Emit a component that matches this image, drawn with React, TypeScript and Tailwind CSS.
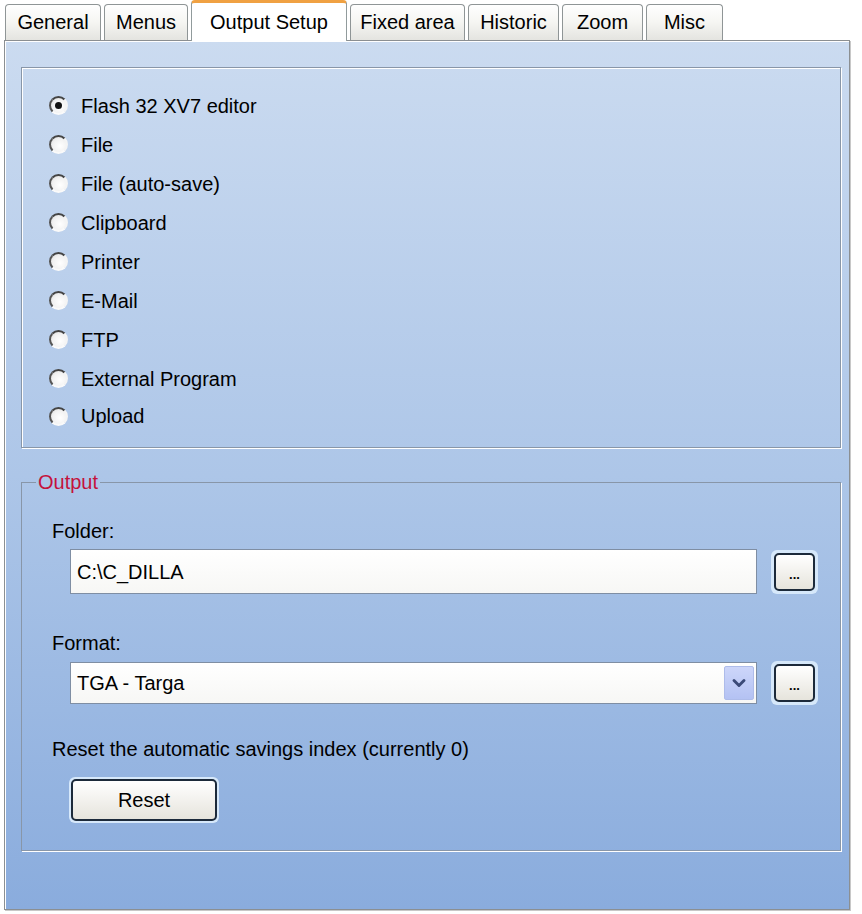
import { ChevronDown } from "lucide-react";

const tabs = ["General", "Menus", "Output Setup", "Fixed area", "Historic", "Zoom", "Misc"];
const tabWidths: Record<string, string> = {
  General: "w-[96px]",
  Menus: "w-[84px]",
  "Output Setup": "w-[156px]",
  "Fixed area": "w-[115px]",
  Historic: "w-[91px]",
  Zoom: "w-[81px]",
  Misc: "w-[77px]",
};

const outputs = [
  "Flash 32 XV7 editor",
  "File",
  "File (auto-save)",
  "Clipboard",
  "Printer",
  "E-Mail",
  "FTP",
  "External Program",
  "Upload",
];

const Radio = ({ checked }: { checked?: boolean }) => (
  <span className="relative w-[19px] h-[19px] rounded-full border-2 border-t-[#444] border-l-[#555] border-r-[#f4f4f4] border-b-[#fafafa] bg-[radial-gradient(circle_at_60%_60%,#ffffff_0%,#f2f2f2_55%,#d8d8d8_100%)] flex items-center justify-center shrink-0">
    {checked && <span className="w-[7px] h-[7px] rounded-full bg-[#111]" />}
  </span>
);

const DotsButton = () => (
  <div className="p-[3px] rounded-[6px] bg-[#d6e8fa]">
    <button className="w-[41px] h-[38px] rounded-[5px] border-2 border-[#1c2a3a] bg-gradient-to-b from-[#ffffff] to-[#e6e4dc] text-[13px] leading-none flex items-end justify-center pb-[8px] font-bold">
      ...
    </button>
  </div>
);

const App = () => {
  return (
    <div className="w-[862px] h-[914px] bg-white text-black text-[20px] font-['Liberation_Sans',Arial,sans-serif]">
      <div className="flex items-end h-[40px] pl-[5px] gap-[3px]">
        {tabs.map((t) =>
          t === "Output Setup" ? (
            <div
              key={t}
              className={`${tabWidths[t]} h-[41px] -mb-[1px] relative z-10 rounded-t-[4px] border border-b-0 border-[#919b9c] border-t-[3px] border-t-[#f0a142] bg-white flex items-start justify-center pt-[4px]`}
            >
              {t}
            </div>
          ) : (
            <div
              key={t}
              className={`${tabWidths[t]} h-[36px] rounded-t-[4px] border border-b-0 border-[#8f9596] bg-gradient-to-b from-[#ffffff] via-[#f5f5f2] to-[#e4e4e0] flex items-center justify-center pb-[2px]`}
            >
              {t}
            </div>
          )
        )}
      </div>

      <div className="ml-[4px] w-[846px] h-[870px] border border-[#8b8f92] shadow-[inset_1px_1px_0_#ffffff,1px_1px_0_#c8c8c8] bg-gradient-to-b from-[#cbdbf0] via-[#adc6e8] to-[#8aacdd] pt-[26px] pl-[16px] pr-[8px]">
        <div className="h-[381px] border border-[#8896a8] shadow-[inset_1px_1px_0_#ffffff,1px_1px_0_#ffffff] pt-[18px] pl-[27px]">
          {outputs.map((o, i) => (
            <div key={o} className={`flex items-center gap-[13px] ${i === outputs.length - 1 ? "h-[36px]" : "h-[39px]"}`}>
              <Radio checked={i === 0} />
              <span>{o}</span>
            </div>
          ))}
        </div>

        <fieldset className="mt-[22px] h-[381px] border border-[#8896a8] shadow-[1px_1px_0_#ffffff] pl-[14px] pr-[20px]">
          <legend className="px-[2px] leading-[24px] text-[#c4123c]">Output</legend>
          <div className="pl-[16px]">
            <div className="mt-[25px] leading-[24px]">Folder:</div>
            <div className="mt-[6px] ml-[18px] flex items-center gap-[14px]">
              <div className="w-[687px] h-[45px] bg-gradient-to-b from-[#ffffff] to-[#f7f7f5] border border-[#7f8ea3] flex items-center px-[6px]">
                C:\C_DILLA
              </div>
              <DotsButton />
            </div>
            <div className="mt-[37px] leading-[24px]">Format:</div>
            <div className="mt-[6px] ml-[18px] flex items-center gap-[14px]">
              <div className="w-[687px] h-[42px] bg-gradient-to-b from-[#ffffff] to-[#f7f7f5] border border-[#7f8ea3] flex items-center pl-[6px] pr-[2px]">
                <span className="flex-1">TGA - Targa</span>
                <span className="w-[30px] h-[34px] rounded-[2px] bg-gradient-to-b from-[#cdd6fa] to-[#b4c2f3] border border-[#aebcea] flex items-center justify-center">
                  <ChevronDown className="w-[20px] h-[20px] text-[#3b4a78]" strokeWidth={3.5} />
                </span>
              </div>
              <DotsButton />
            </div>
            <div className="mt-[32px] leading-[24px]">Reset the automatic savings index (currently 0)</div>
            <div className="mt-[16px] ml-[17px] w-fit p-[2px] rounded-[6px] bg-[#d6e8fa]">
              <button className="w-[146px] h-[42px] rounded-[5px] border-2 border-[#1c2a3a] bg-gradient-to-b from-[#ffffff] to-[#e6e4dc] leading-none">
                Reset
              </button>
            </div>
          </div>
        </fieldset>
      </div>
    </div>
  );
};

export default App;
